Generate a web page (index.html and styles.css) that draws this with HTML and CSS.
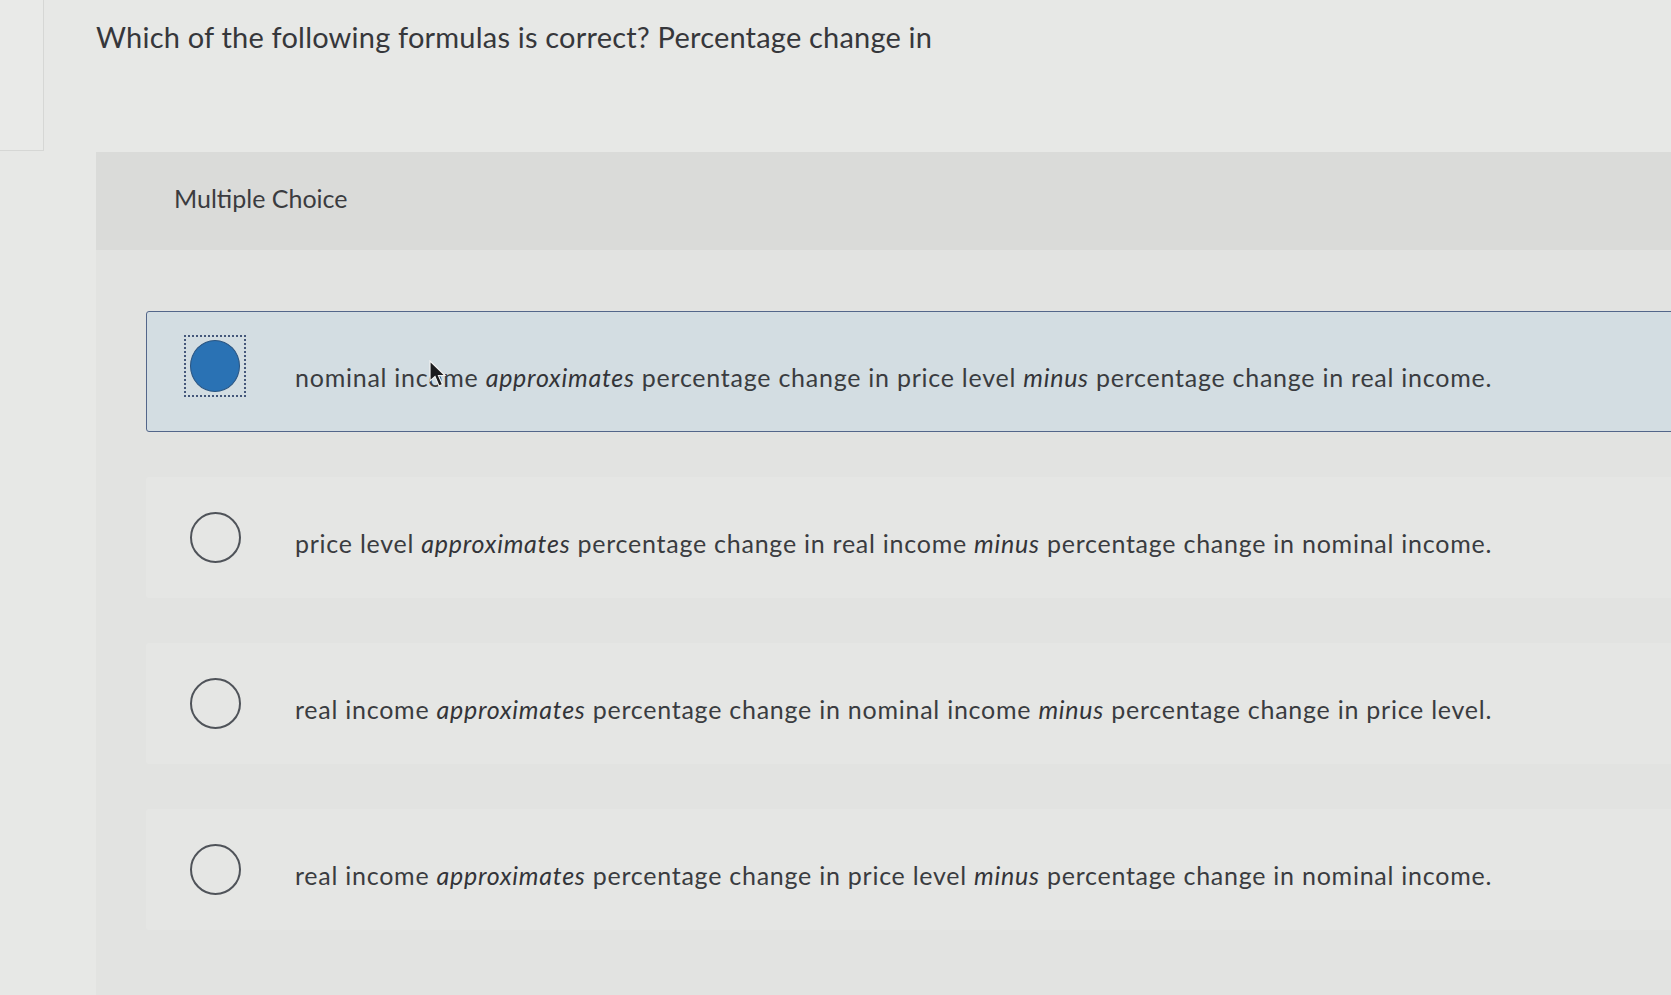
FILE: index.html
```html
<!DOCTYPE html>
<html lang="en">
<head>
    <meta charset="UTF-8">
    <meta name="viewport" content="width=device-width, initial-scale=1.0">
    <title>Multiple Choice</title>
    <link rel="stylesheet" href="styles.css">
</head>
<body>
    <div class="side_edge"></div>

    <div class="question">Which of the following formulas is correct? Percentage change in</div>

    <div class="mc">
        <div class="mc_head">Multiple Choice</div>

        <div class="options">
            <label class="option selected">
                <span class="radio_wrap"><span class="radio"></span></span>
                <span class="option_text">nominal income <em>approximates</em> percentage change in price level <em>minus</em> percentage change in real income.</span>
                <!-- マウスカーソル -->
                <svg class="cursor" width="18" height="28" viewBox="0 0 18 28">
                    <path d="M1 1 L1 21 L6 16.5 L10 26 L13.5 24.5 L9.5 15.5 L16 15.5 Z" fill="#1c1c1e" stroke="#f2f2f2" stroke-width="1.2"/>
                </svg>
            </label>
            <label class="option">
                <span class="radio_wrap"><span class="radio"></span></span>
                <span class="option_text">price level <em>approximates</em> percentage change in real income <em>minus</em> percentage change in nominal income.</span>
            </label>
            <label class="option">
                <span class="radio_wrap"><span class="radio"></span></span>
                <span class="option_text">real income <em>approximates</em> percentage change in nominal income <em>minus</em> percentage change in price level.</span>
            </label>
            <label class="option">
                <span class="radio_wrap"><span class="radio"></span></span>
                <span class="option_text">real income <em>approximates</em> percentage change in price level <em>minus</em> percentage change in nominal income.</span>
            </label>
        </div>
    </div>
</body>
</html>
```

FILE: styles.css
```css
html, body {
    margin: 0;
    height: 100%;
}
body {
    background-color: #e7e8e6;
    font-family: "Lato", "Liberation Sans", sans-serif;
    color: #3a3b3e;
    overflow: hidden;
}

/*左端のパネルの縁*/
.side_edge {
    position: absolute;
    left: 0;
    top: 0;
    width: 43px;
    height: 150px;
    border-right: 1px solid #d6d7d5;
    border-bottom: 1px solid #d6d7d5;
    background-color: #e9eae8;
}

/*問題文*/
.question {
    padding: 19px 0 0 96px;
    height: 133px;
    font-size: 29px;
    letter-spacing: 0.2px;
    color: #36373b;
}

/*Multiple Choice全体*/
.mc {
    margin-left: 96px;
    background-color: #e2e3e1;
    height: 843px;
}
.mc_head {
    height: 98px;
    box-sizing: border-box;
    padding: 31px 0 0 78px;
    font-size: 25px;
    background-color: #dadbd9;
    color: #3b3c40;
}

/*選択肢*/
.options {
    display: flex;
    flex-direction: column;
    gap: 45px;
    padding-top: 61px;
}
.option {
    position: relative;
    display: flex;
    align-items: center;
    gap: 49px;
    height: 121px;
    box-sizing: border-box;
    margin-left: 50px;
    margin-right: -10px;
    padding-left: 37px;
    border: 1.5px solid transparent;
    border-radius: 3px;
    background-color: #e5e6e4;
}
.option.selected {
    border-color: #53668a;
    background-color: #d3dde2;
}
.option_text {
    font-size: 25px;
    letter-spacing: 0.75px;
    color: #3a3c40;
    padding-top: 10px;
}
.option_text em {
    font-style: italic;
    color: #333438;
}

/*ラジオボタン*/
.radio_wrap {
    width: 58px;
    height: 58px;
    display: flex;
    align-items: center;
    justify-content: center;
    border: 2px dotted transparent;
    flex-shrink: 0;
}
.radio {
    width: 47px;
    height: 47px;
    border-radius: 50%;
    border: 2px solid #4f5359;
}
.option.selected .radio_wrap {
    border-color: #44577a;
    margin-bottom: 12px;
}
.option.selected .radio {
    width: 48px;
    height: 50px;
    border: 1.5px solid #2a5582;
    background-color: #2a72b4;
}

.cursor {
    position: absolute;
    left: 282px;
    top: 48px;
}
```
